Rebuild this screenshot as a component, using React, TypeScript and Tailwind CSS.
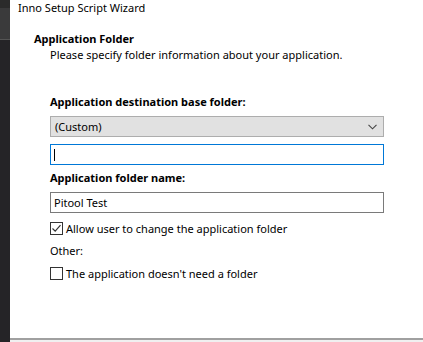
const font = { fontFamily: '"Noto Sans", "Segoe UI", sans-serif' };

function Chevron() {
  return (
    <svg width="9" height="6" viewBox="0 0 9 6" className="text-[#444]">
      <polyline points="0.5,0.8 4.5,4.8 8.5,0.8" fill="none" stroke="currentColor" strokeWidth="1.1" />
    </svg>
  );
}

function CheckBox({ checked }: { checked?: boolean }) {
  return (
    <span className="flex h-[13px] w-[13px] shrink-0 items-center justify-center border border-[#333] bg-white">
      {checked && (
        <svg width="11" height="11" viewBox="0 0 11 11">
          <polyline points="1.5,5.5 4.2,8.2 9.5,2.2" fill="none" stroke="#333" strokeWidth="1.2" />
        </svg>
      )}
    </span>
  );
}

export default function App() {
  return (
    <div className="flex h-[342px] w-[423px] overflow-hidden bg-white text-[11px] leading-[14px] text-black" style={font}>
      {/* dark strip left of the window */}
      <div className="flex w-[10px] shrink-0 flex-col bg-[#252427]">
        <div className="h-[8px] bg-[#2b2b2b]" />
        <div className="h-[32px] border-b border-[#555] bg-[#3a3a3b]" />
      </div>

      <div className="flex flex-1 flex-col">
        <div className="flex-1">
          <div className="pl-[8px] pt-[1px]">Inno Setup Script Wizard</div>

          <div className="pl-[24px] pt-[17px]">
            <div className="font-bold">Application Folder</div>
            <div className="pl-[16px] pt-[2px]">Please specify folder information about your application.</div>
          </div>

          <div className="pl-[40px] pt-[33px]" style={{ width: 374 }}>
            <div className="font-bold">Application destination base folder:</div>

            <div className="mt-[7px] flex h-[21px] items-center justify-between border border-[#adadad] bg-[#e1e1e1] pl-[4px] pr-[6px]">
              <span>(Custom)</span>
              <Chevron />
            </div>

            <div className="mt-[7px] flex h-[21px] items-center border border-[#0078d7] bg-white px-[3px]">
              <span className="h-[12px] w-px bg-black" />
            </div>

            <div className="mt-[6px] font-bold">Application folder name:</div>

            <div className="mt-[7px] flex h-[21px] items-center border border-[#7a7a7a] bg-white px-[3px]">
              Pitool Test
            </div>

            <div className="mt-[9px] flex h-[13px] items-center gap-[3px]">
              <CheckBox checked />
              <span>Allow user to change the application folder</span>
            </div>

            <div className="mt-[9px]">Other:</div>

            <div className="mt-[9px] flex h-[13px] items-center gap-[3px]">
              <CheckBox />
              <span>The application doesn't need a folder</span>
            </div>
          </div>
        </div>

        <div className="h-[4px] border-t-2 border-[#a0a0a0] bg-[#f0f0f0]" />
      </div>
    </div>
  );
}
